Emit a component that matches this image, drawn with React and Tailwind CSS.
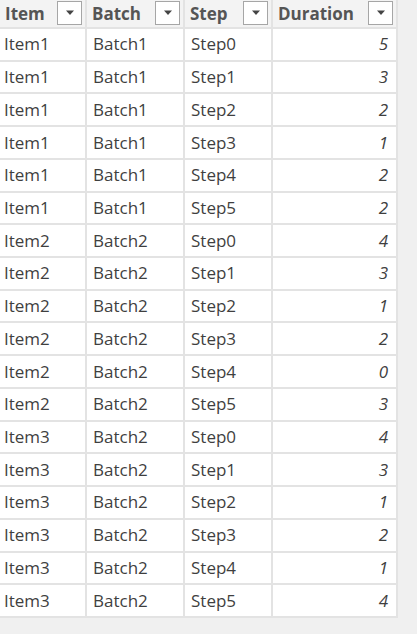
const rows = [
  ['Item1', 'Batch1', 'Step0', 5],
  ['Item1', 'Batch1', 'Step1', 3],
  ['Item1', 'Batch1', 'Step2', 2],
  ['Item1', 'Batch1', 'Step3', 1],
  ['Item1', 'Batch1', 'Step4', 2],
  ['Item1', 'Batch1', 'Step5', 2],
  ['Item2', 'Batch2', 'Step0', 4],
  ['Item2', 'Batch2', 'Step1', 3],
  ['Item2', 'Batch2', 'Step2', 1],
  ['Item2', 'Batch2', 'Step3', 2],
  ['Item2', 'Batch2', 'Step4', 0],
  ['Item2', 'Batch2', 'Step5', 3],
  ['Item3', 'Batch2', 'Step0', 4],
  ['Item3', 'Batch2', 'Step1', 3],
  ['Item3', 'Batch2', 'Step2', 1],
  ['Item3', 'Batch2', 'Step3', 2],
  ['Item3', 'Batch2', 'Step4', 1],
  ['Item3', 'Batch2', 'Step5', 4],
];

const cols = [
  { label: 'Item', w: 'w-[87px]' },
  { label: 'Batch', w: 'w-[98px]' },
  { label: 'Step', w: 'w-[88px]' },
  { label: 'Duration', w: 'w-[125px]' },
];

function FilterBox() {
  return (
    <span className="flex h-[24px] w-[25px] shrink-0 items-center justify-center border border-[#a6a6a6] bg-white">
      <svg width="10" height="6" viewBox="0 0 10 6">
        <path d="M1 0.5 L9 0.5 L5 5 Z" fill="#444" />
      </svg>
    </span>
  );
}

export default function App() {
  return (
    <div
      className="h-[634px] w-[417px] bg-[#f0f0f0] text-[17px]"
      style={{ fontFamily: '"Open Sans", "Noto Sans", sans-serif' }}
    >
      <div className="w-[398px] bg-white">
        <div className="flex h-[29px] bg-[#f3f3f3] border-b-2 border-[#e3e3e3]">
          {cols.map((c) => (
            <div
              key={c.label}
              className={`${c.w} flex items-start justify-between pl-[5px] pr-[3px] pt-[1px] border-r-2 border-[#e3e3e3]`}
            >
              <span className="font-bold text-[#555] leading-[26px] whitespace-nowrap">{c.label}</span>
              <FilterBox />
            </div>
          ))}
        </div>
        {rows.map((r, idx) => (
          <div key={idx} className="flex h-[32.72px] border-b-2 border-[#e3e3e3] text-[#3f3f3f] leading-none">
            <div className="w-[87px] border-r-2 border-[#e3e3e3] pl-[4px] pb-[1px] flex items-center">{r[0]}</div>
            <div className="w-[98px] border-r-2 border-[#e3e3e3] pl-[6px] pb-[1px] flex items-center">{r[1]}</div>
            <div className="w-[88px] border-r-2 border-[#e3e3e3] pl-[6px] pb-[1px] flex items-center">{r[2]}</div>
            <div className="w-[125px] border-r-2 border-[#e3e3e3] pr-[8px] pb-[1px] flex items-center justify-end italic">{r[3]}</div>
          </div>
        ))}
      </div>
    </div>
  );
}
